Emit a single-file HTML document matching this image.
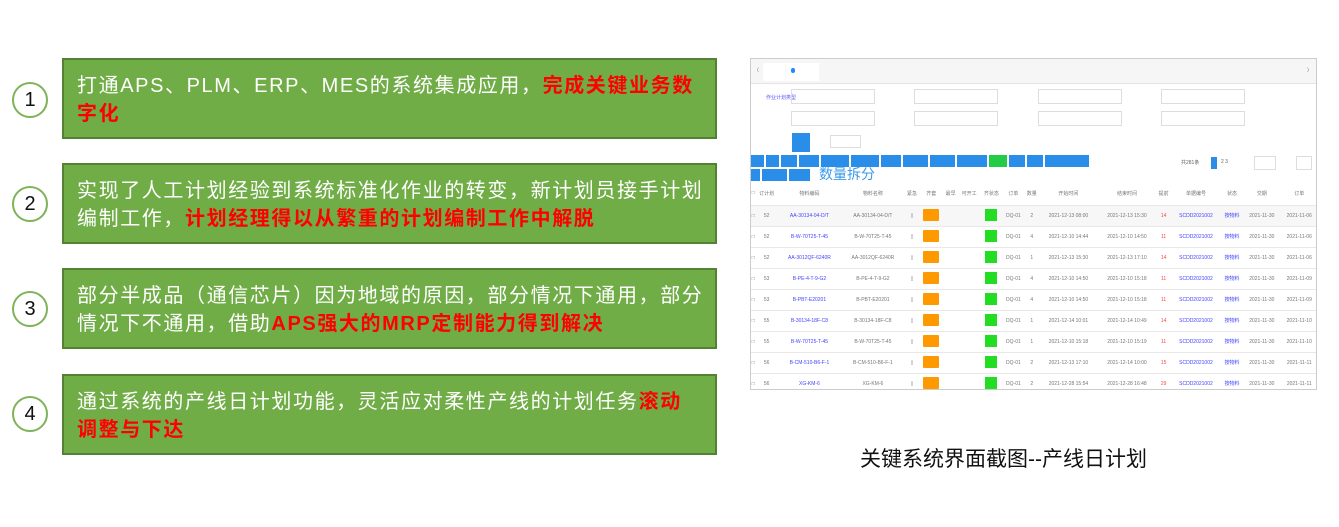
<!DOCTYPE html>
<html><head><meta charset="utf-8"><style>
*{margin:0;padding:0;box-sizing:border-box}
body{width:1339px;height:527px;background:#fff;position:relative;font-family:"Liberation Sans","Noto Sans CJK SC",sans-serif;overflow:hidden}
.c{position:absolute;left:12px;width:36px;height:36px;border:2px solid #7fb35a;border-radius:50%;font-size:20px;line-height:32px;text-align:center;color:#111;background:#fff}
.b{position:absolute;left:62px;width:655px;height:81px;background:#70ad47;border:2px solid #548235;color:#fff;font-size:20px;letter-spacing:1.6px;line-height:28px;padding:12px 8px 0 13px}
.r{color:#f00;font-weight:bold}
.s{position:absolute;left:750px;top:58px;width:567px;height:332px;border:1px solid #ccc;background:#fff;overflow:hidden;font-size:5px;color:#666}
.ab{position:absolute}
table{border-collapse:collapse;position:absolute;left:0;top:123px;width:567px}
td{height:21px;border-bottom:1px solid #e8e8e8;text-align:center;font-size:5px;color:#777;white-space:nowrap}
.bl{color:#44f}.or{display:inline-block;width:16px;height:12px;background:#f90;border-radius:1px}.gr{display:inline-block;width:12px;height:12px;background:#2d2}
.btn{position:absolute;height:12px;background:#2a8ee8;top:0}
</style></head><body>
<div class="c" style="top:82px">1</div>
<div class="c" style="top:186px">2</div>
<div class="c" style="top:291px">3</div>
<div class="c" style="top:396px">4</div>
<div class="b" style="top:58px">打通APS、PLM、ERP、MES的系统集成应用，<span class="r">完成关键业务数字化</span></div>
<div class="b" style="top:163px">实现了人工计划经验到系统标准化作业的转变，新计划员接手计划编制工作，<span class="r">计划经理得以从繁重的计划编制工作中解脱</span></div>
<div class="b" style="top:268px">部分半成品（通信芯片）因为地域的原因，部分情况下通用，部分情况下不通用，借助<span class="r">APS强大的MRP定制能力得到解决</span></div>
<div class="b" style="top:374px;padding-right:22px">通过系统的产线日计划功能，灵活应对柔性产线的计划任务<span class="r">滚动调整与下达</span></div>
<div style="position:absolute;left:860px;top:443px;font-size:21px;color:#111">关键系统界面截图--产线日计划</div>
<div class="s">
 <div class="ab" style="left:0;top:0;width:567px;height:25px;background:#f6f6f6;border-bottom:1px solid #e4e4e4"></div>
 <div class="ab" style="left:3px;top:8px">〈</div><div class="ab" style="left:556px;top:8px">〉</div>
 <div class="ab" style="left:12px;top:4px;width:22px;height:18px;background:#fff"></div>
 <div class="ab" style="left:35px;top:4px;width:33px;height:18px;background:#fff"></div>
 <div class="ab" style="left:40px;top:9px;width:4px;height:5px;background:#28f;border-radius:2px"></div>
 <div class="ab" style="left:15px;top:35px;color:#55f">作业计划类型</div>
 <div class="ab" style="left:40px;top:30px;width:84px;height:15px;border:1px solid #ddd"></div>
 <div class="ab" style="left:163px;top:30px;width:84px;height:15px;border:1px solid #ddd"></div>
 <div class="ab" style="left:287px;top:30px;width:84px;height:15px;border:1px solid #ddd"></div>
 <div class="ab" style="left:410px;top:30px;width:84px;height:15px;border:1px solid #ddd"></div>
 <div class="ab" style="left:40px;top:52px;width:84px;height:15px;border:1px solid #ddd"></div>
 <div class="ab" style="left:163px;top:52px;width:84px;height:15px;border:1px solid #ddd"></div>
 <div class="ab" style="left:287px;top:52px;width:84px;height:15px;border:1px solid #ddd"></div>
 <div class="ab" style="left:410px;top:52px;width:84px;height:15px;border:1px solid #ddd"></div>
 <div class="ab" style="left:41px;top:74px;width:18px;height:19px;background:#2a8ee8"></div>
 <div class="ab" style="left:79px;top:76px;width:31px;height:13px;border:1px solid #ddd"></div>
 <div class="ab" style="left:0;top:96px;width:340px;height:12px">
  <div class="btn" style="left:0;width:13px"></div><div class="btn" style="left:15px;width:13px"></div><div class="btn" style="left:30px;width:16px"></div><div class="btn" style="left:48px;width:20px"></div><div class="btn" style="left:70px;width:28px"></div><div class="btn" style="left:100px;width:28px"></div><div class="btn" style="left:130px;width:20px"></div><div class="btn" style="left:152px;width:25px"></div><div class="btn" style="left:179px;width:25px"></div><div class="btn" style="left:206px;width:30px"></div><div class="btn" style="left:238px;width:18px;background:#2c4"></div><div class="btn" style="left:258px;width:16px"></div><div class="btn" style="left:276px;width:16px"></div><div class="btn" style="left:294px;width:44px"></div>
 </div>
 <div class="ab" style="left:0;top:110px;width:60px;height:12px"><div class="btn" style="left:0;width:9px"></div><div class="btn" style="left:11px;width:25px"></div><div class="btn" style="left:38px;width:21px"></div></div>
 <div class="ab" style="left:68px;top:107px;font-size:14px;color:#3a9ae8;line-height:16px">数量拆分</div>
 <div class="ab" style="left:430px;top:100px">共281条</div>
 <div class="ab" style="left:460px;top:98px;width:6px;height:12px;background:#2a8ee8"></div>
 <div class="ab" style="left:470px;top:100px">2 3</div>
 <div class="ab" style="left:503px;top:97px;width:22px;height:14px;border:1px solid #ddd"></div>
 <div class="ab" style="left:545px;top:97px;width:16px;height:14px;border:1px solid #ddd"></div>
 <table>
 <tr style="height:23px"><td>□</td><td>订计划</td><td>物料编码</td><td>物料名称</td><td>紧急</td><td>齐套</td><td>最早</td><td>可开工</td><td>齐状态</td><td>订单</td><td>数量</td><td>开始时间</td><td>结束时间</td><td>提前</td><td>单据编号</td><td>状态</td><td>交期</td><td>订单</td></tr>
 <tr style="background:#f7f7f7"><td>□</td><td>52</td><td class="bl">AA-30134-04-D/T</td><td>AA-30134-04-D/T</td><td>▯</td><td><span class="or"></span></td><td></td><td></td><td><span class="gr"></span></td><td>DQ-01</td><td>2</td><td>2021-12-13 08:00</td><td>2021-12-13 15:30</td><td style="color:#f44">14</td><td class="bl">SCDD2021002</td><td class="bl">按物料</td><td>2021-11-30</td><td>2021-11-06</td></tr>
 <tr><td>□</td><td>52</td><td class="bl">B-W-70T25-T-45</td><td>B-W-70T25-T-45</td><td>▯</td><td><span class="or"></span></td><td></td><td></td><td><span class="gr"></span></td><td>DQ-01</td><td>4</td><td>2021-12-10 14:44</td><td>2021-12-10 14:50</td><td style="color:#f44">11</td><td class="bl">SCDD2021002</td><td class="bl">按物料</td><td>2021-11-30</td><td>2021-11-06</td></tr>
 <tr><td>□</td><td>52</td><td class="bl">AA-3012QF-6240R</td><td>AA-3012QF-6240R</td><td>▯</td><td><span class="or"></span></td><td></td><td></td><td><span class="gr"></span></td><td>DQ-01</td><td>1</td><td>2021-12-13 15:30</td><td>2021-12-13 17:10</td><td style="color:#f44">14</td><td class="bl">SCDD2021002</td><td class="bl">按物料</td><td>2021-11-30</td><td>2021-11-06</td></tr>
 <tr><td>□</td><td>53</td><td class="bl">B-PE-4-T-9-G2</td><td>B-PE-4-T-9-G2</td><td>▯</td><td><span class="or"></span></td><td></td><td></td><td><span class="gr"></span></td><td>DQ-01</td><td>4</td><td>2021-12-10 14:50</td><td>2021-12-10 15:18</td><td style="color:#f44">11</td><td class="bl">SCDD2021002</td><td class="bl">按物料</td><td>2021-11-30</td><td>2021-11-09</td></tr>
 <tr><td>□</td><td>53</td><td class="bl">B-PBT-E20201</td><td>B-PBT-E20201</td><td>▯</td><td><span class="or"></span></td><td></td><td></td><td><span class="gr"></span></td><td>DQ-01</td><td>4</td><td>2021-12-10 14:50</td><td>2021-12-10 15:18</td><td style="color:#f44">11</td><td class="bl">SCDD2021002</td><td class="bl">按物料</td><td>2021-11-30</td><td>2021-11-09</td></tr>
 <tr><td>□</td><td>55</td><td class="bl">B-30134-18F-C8</td><td>B-30134-18F-C8</td><td>▯</td><td><span class="or"></span></td><td></td><td></td><td><span class="gr"></span></td><td>DQ-01</td><td>1</td><td>2021-12-14 10:01</td><td>2021-12-14 10:49</td><td style="color:#f44">14</td><td class="bl">SCDD2021002</td><td class="bl">按物料</td><td>2021-11-30</td><td>2021-11-10</td></tr>
 <tr><td>□</td><td>55</td><td class="bl">B-W-70T25-T-45</td><td>B-W-70T25-T-45</td><td>▯</td><td><span class="or"></span></td><td></td><td></td><td><span class="gr"></span></td><td>DQ-01</td><td>1</td><td>2021-12-10 15:18</td><td>2021-12-10 15:19</td><td style="color:#f44">11</td><td class="bl">SCDD2021002</td><td class="bl">按物料</td><td>2021-11-30</td><td>2021-11-10</td></tr>
 <tr><td>□</td><td>56</td><td class="bl">B-CM-510-B6-F-1</td><td>B-CM-510-B6-F-1</td><td>▯</td><td><span class="or"></span></td><td></td><td></td><td><span class="gr"></span></td><td>DQ-01</td><td>2</td><td>2021-12-13 17:10</td><td>2021-12-14 10:00</td><td style="color:#f44">15</td><td class="bl">SCDD2021002</td><td class="bl">按物料</td><td>2021-11-30</td><td>2021-11-11</td></tr>
 <tr><td>□</td><td>56</td><td class="bl">XG-KM-6</td><td>XG-KM-6</td><td>▯</td><td><span class="or"></span></td><td></td><td></td><td><span class="gr"></span></td><td>DQ-01</td><td>2</td><td>2021-12-28 15:54</td><td>2021-12-28 16:48</td><td style="color:#f44">29</td><td class="bl">SCDD2021002</td><td class="bl">按物料</td><td>2021-11-30</td><td>2021-11-11</td></tr>
 </table>
</div>
</body></html>
